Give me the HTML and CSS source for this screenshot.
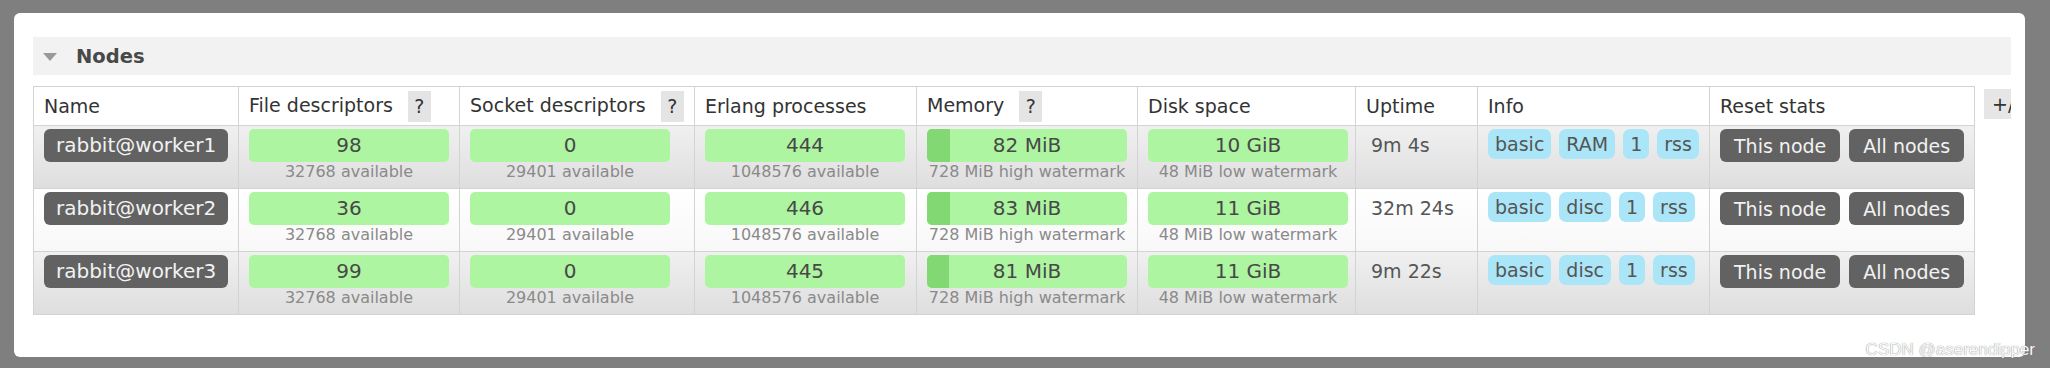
FILE: index.html
```html
<!DOCTYPE html>
<html lang="en">
<head>
    <meta charset="UTF-8">
    <meta name="viewport" content="width=device-width, initial-scale=1.0">
    <title>Nodes</title>
    <link rel="stylesheet" href="styles.css">
</head>
<body>
<div class="panel">
    <div class="section">
        <h2 class="section-title"><span class="arrow"></span>Nodes</h2>
        <div class="section-body">
            <table class="list">
                <colgroup>
                    <col class="c-name">
                    <col class="c-fd">
                    <col class="c-sock">
                    <col class="c-proc">
                    <col class="c-mem">
                    <col class="c-disk">
                    <col class="c-up">
                    <col class="c-info">
                    <col class="c-reset">
                </colgroup>
                <tr>
                    <th>Name</th>
                    <th>File descriptors <span class="help">?</span></th>
                    <th>Socket descriptors <span class="help">?</span></th>
                    <th>Erlang processes</th>
                    <th>Memory <span class="help">?</span></th>
                    <th>Disk space</th>
                    <th>Uptime</th>
                    <th>Info</th>
                    <th>Reset stats</th>
                </tr>
                <tr class="alt1">
                    <td><span class="node">rabbit@worker1</span></td>
                    <td><div class="bar"><span class="val">98</span></div><div class="sub">32768 available</div></td>
                    <td><div class="bar"><span class="val">0</span></div><div class="sub">29401 available</div></td>
                    <td><div class="bar"><span class="val">444</span></div><div class="sub">1048576 available</div></td>
                    <td><div class="bar"><span class="fill" style="width:22.5px"></span><span class="val">82 MiB</span></div><div class="sub">728 MiB high watermark</div></td>
                    <td><div class="bar"><span class="val">10 GiB</span></div><div class="sub">48 MiB low watermark</div></td>
                    <td class="uptime">9m 4s</td>
                    <td><span class="tag">basic</span><span class="tag">RAM</span><span class="tag">1</span><span class="tag">rss</span></td>
                    <td><button class="btn">This node</button><button class="btn">All nodes</button></td>
                </tr>
                <tr class="alt2">
                    <td><span class="node">rabbit@worker2</span></td>
                    <td><div class="bar"><span class="val">36</span></div><div class="sub">32768 available</div></td>
                    <td><div class="bar"><span class="val">0</span></div><div class="sub">29401 available</div></td>
                    <td><div class="bar"><span class="val">446</span></div><div class="sub">1048576 available</div></td>
                    <td><div class="bar"><span class="fill" style="width:22.8px"></span><span class="val">83 MiB</span></div><div class="sub">728 MiB high watermark</div></td>
                    <td><div class="bar"><span class="val">11 GiB</span></div><div class="sub">48 MiB low watermark</div></td>
                    <td class="uptime">32m 24s</td>
                    <td><span class="tag">basic</span><span class="tag">disc</span><span class="tag">1</span><span class="tag">rss</span></td>
                    <td><button class="btn">This node</button><button class="btn">All nodes</button></td>
                </tr>
                <tr class="alt1">
                    <td><span class="node">rabbit@worker3</span></td>
                    <td><div class="bar"><span class="val">99</span></div><div class="sub">32768 available</div></td>
                    <td><div class="bar"><span class="val">0</span></div><div class="sub">29401 available</div></td>
                    <td><div class="bar"><span class="val">445</span></div><div class="sub">1048576 available</div></td>
                    <td><div class="bar"><span class="fill" style="width:22.3px"></span><span class="val">81 MiB</span></div><div class="sub">728 MiB high watermark</div></td>
                    <td><div class="bar"><span class="val">11 GiB</span></div><div class="sub">48 MiB low watermark</div></td>
                    <td class="uptime">9m 22s</td>
                    <td><span class="tag">basic</span><span class="tag">disc</span><span class="tag">1</span><span class="tag">rss</span></td>
                    <td><button class="btn">This node</button><button class="btn">All nodes</button></td>
                </tr>
            </table>
            <span class="columns">+/-</span>
        </div>
    </div>
</div>
<div class="mark">CSDN @aserendipper</div>
</body>
</html>
```

FILE: styles.css
```css
html,body{
    margin:0;
    height:368px;
    overflow:hidden;
}
body{
    background:#7f7f7f;
    font-family:"DejaVu Sans",Verdana,sans-serif;
    color:#444;
    position:relative;
}
.panel{
    margin:13px 0 0 14px;
    width:2011px;
    height:344px;
    background:#fff;
    border-radius:6px;
    box-sizing:border-box;
    padding:24px 0 0 19px;
}
.section{
    width:1978px;
}
.section-title{
    margin:0;
    height:38px;
    background:#f2f2f2;
    display:flex;
    align-items:center;
    font-size:19.5px;
    font-weight:bold;
    color:#484848;
}
.arrow{
    width:0;
    height:0;
    margin:2px 19px 0 10px;
    border-left:7px solid transparent;
    border-right:7px solid transparent;
    border-top:8px solid #999;
}
.section-body{
    margin-top:11px;
    display:flex;
    align-items:flex-start;
    gap:9px;
    overflow:hidden;
}
table.list{
    border-collapse:collapse;
    table-layout:fixed;
    width:1941px;
    flex:none;
    font-size:19.5px;
}
.c-name{width:205px;}
.c-fd{width:221px;}
.c-sock{width:235px;}
.c-proc{width:222px;}
.c-mem{width:221px;}
.c-disk{width:218px;}
.c-up{width:122px;}
.c-info{width:232px;}
.c-reset{width:265px;}
table.list th{
    height:38px;
    padding:0 10px;
    text-align:left;
    font-weight:normal;
    color:#333;
    font-size:19px;
    border:1px solid #d3d3d3;
    white-space:nowrap;
    background:#fff;
}
table.list td{
    border:1px solid #d3d3d3;
    padding:3px 10px 7px;
    vertical-align:top;
    white-space:nowrap;
}
tr.alt1{
    background:linear-gradient(#f0f0f0,#dedede);
}
tr.alt2{
    background:linear-gradient(#fff,#f8f8f8);
}
.help{
    display:inline-block;
    width:23px;
    height:31px;
    line-height:31px;
    margin-left:9px;
    text-align:center;
    background:#e4e4e4;
    vertical-align:middle;
}
.node{
    display:inline-block;
    height:33px;
    line-height:33px;
    padding:0 12px;
    border-radius:6px;
    background:#626262;
    color:#f2f2f2;
    font-size:20px;
}
.bar{
    position:relative;
    width:200px;
    height:33px;
    line-height:33px;
    border-radius:5px;
    background:#adf5a0;
    overflow:hidden;
    text-align:center;
    font-size:20px;
    color:#484848;
}
.fill{
    position:absolute;
    left:0;
    top:0;
    bottom:0;
    background:#82d872;
}
.val{
    position:relative;
}
.sub{
    width:200px;
    text-align:center;
    font-size:16px;
    line-height:19px;
    color:#8a8a8a;
}
.uptime{
    line-height:33px;
    color:#555;
    font-size:19px;
}
table.list td.uptime{
    padding-left:15px;
}
.tag{
    display:inline-block;
    height:30px;
    line-height:30px;
    padding:0 7px;
    margin:0 8px 0 0;
    border-radius:7px;
    background:#abe5f8;
    color:#555;
    font-size:19px;
}
.btn{
    height:33px;
    padding:0 14px;
    margin:0 9px 0 0;
    border:0;
    border-radius:6px;
    background:#626262;
    color:#f2f2f2;
    font-family:inherit;
    font-size:19px;
}
.columns{
    flex:none;
    margin-top:3px;
    height:30px;
    line-height:30px;
    padding:0 8px;
    background:#e6e6e6;
    color:#333;
    font-size:19px;
}
.mark{
    position:absolute;
    right:15px;
    bottom:8px;
    font-family:"Liberation Sans",Arial,sans-serif;
    font-size:17px;
    color:#fafafa;
    text-shadow:0 0 1px #666;
}
```
